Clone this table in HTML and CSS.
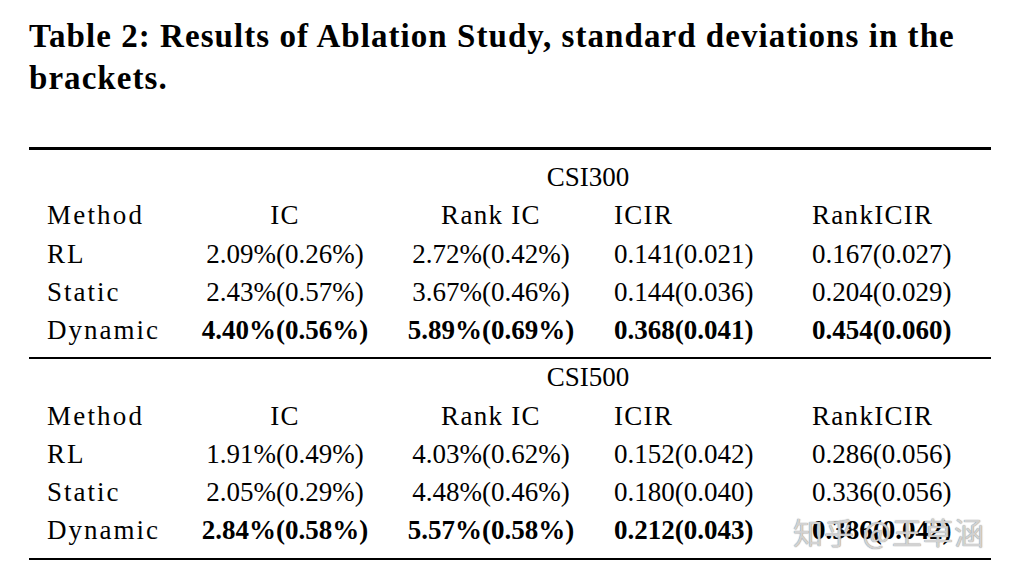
FILE: index.html
```html
<!DOCTYPE html>
<html lang="en">
<head>
<meta charset="utf-8">
<title>Table 2</title>
<link rel="stylesheet" href="styles.css">
</head>
<body>
<div class="page">
  <p class="caption">Table 2: Results of Ablation Study, standard deviations in the brackets.</p>
  <div class="table">
    <div class="rule rule-top"></div>
    <div class="grid">
      <div class="group">CSI300</div>
      <div class="c1 hd">Method</div><div class="c2 hd">IC</div><div class="c3 hd">Rank IC</div><div class="c4 hd">ICIR</div><div class="c5 hd">RankICIR</div>
      <div class="c1">RL</div><div class="c2">2.09%(0.26%)</div><div class="c3">2.72%(0.42%)</div><div class="c4">0.141(0.021)</div><div class="c5">0.167(0.027)</div>
      <div class="c1">Static</div><div class="c2">2.43%(0.57%)</div><div class="c3">3.67%(0.46%)</div><div class="c4">0.144(0.036)</div><div class="c5">0.204(0.029)</div>
      <div class="c1">Dynamic</div><div class="c2 b">4.40%(0.56%)</div><div class="c3 b">5.89%(0.69%)</div><div class="c4 b">0.368(0.041)</div><div class="c5 b">0.454(0.060)</div>
    </div>
    <div class="rule rule-mid"></div>
    <div class="grid grid-second">
      <div class="group">CSI500</div>
      <div class="c1 hd">Method</div><div class="c2 hd">IC</div><div class="c3 hd">Rank IC</div><div class="c4 hd">ICIR</div><div class="c5 hd">RankICIR</div>
      <div class="c1">RL</div><div class="c2">1.91%(0.49%)</div><div class="c3">4.03%(0.62%)</div><div class="c4">0.152(0.042)</div><div class="c5">0.286(0.056)</div>
      <div class="c1">Static</div><div class="c2">2.05%(0.29%)</div><div class="c3">4.48%(0.46%)</div><div class="c4">0.180(0.040)</div><div class="c5">0.336(0.056)</div>
      <div class="c1">Dynamic</div><div class="c2 b">2.84%(0.58%)</div><div class="c3 b">5.57%(0.58%)</div><div class="c4 b">0.212(0.043)</div><div class="c5 b">0.386(0.042)</div>
    </div>
    <div class="rule rule-bottom"></div>
    <div class="watermark">知乎 @王草涵</div>
  </div>
</div>
</body>
</html>
```

FILE: styles.css
```css
html, body {
  margin: 0;
  padding: 0;
  background: #ffffff;
}

body {
  font-family: "Liberation Serif", "Times New Roman", serif;
  color: #000000;
}

.page {
  width: 962px;
  padding: 15px 20px 0 29px;
}

.caption {
  margin: 0;
  font-weight: bold;
  font-size: 33px;
  line-height: 42px;
  letter-spacing: 1.05px;
}

.table {
  position: relative;
  margin-top: 48px;
}

.rule {
  background: #000;
}

.rule-top {
  height: 3px;
  margin-bottom: 8px;
}

.rule-mid {
  height: 2px;
  margin-top: 8px;
  margin-bottom: -1px;
}

.rule-bottom {
  height: 2px;
  margin-top: 8px;
}

.grid {
  display: grid;
  grid-template-columns: 171px 170px 242px 198px 182px;
  grid-auto-rows: 38.25px;
  align-items: center;
  font-size: 27px;
  line-height: 30px;
}

.group {
  grid-column: 2 / 6;
  text-align: center;
  padding-right: 16px;
}

.c1 {
  padding-left: 18px;
  letter-spacing: 2px;
}

.c2, .c3 {
  text-align: center;
}

.c4, .c5 {
  padding-left: 2px;
}

.hd {
  letter-spacing: 1.3px;
}

.c1.hd {
  letter-spacing: 2.2px;
}

.b {
  font-weight: bold;
}

.watermark {
  position: absolute;
  right: 6px;
  bottom: 12px;
  font-family: "Noto Sans CJK SC", sans-serif;
  font-size: 30px;
  line-height: 34px;
  color: rgba(235, 235, 235, 0.75);
  text-shadow: 0 0 1px rgba(120, 120, 120, 0.8), 0 0 1px rgba(120, 120, 120, 0.6);
  letter-spacing: 1px;
}
```
